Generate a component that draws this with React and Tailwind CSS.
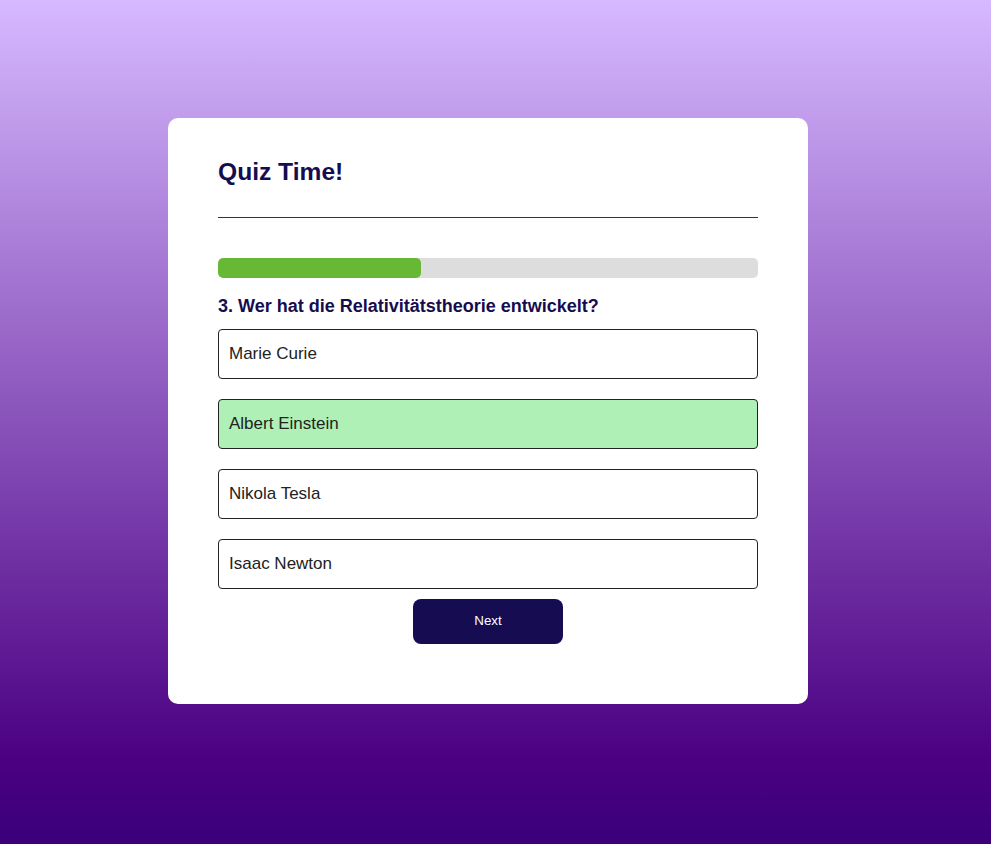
import React, { useState } from 'react';

const question = {
  number: 3,
  text: 'Wer hat die Relativitätstheorie entwickelt?',
  options: ['Marie Curie', 'Albert Einstein', 'Nikola Tesla', 'Isaac Newton'],
};

function App() {
  const [selected, setSelected] = useState('Albert Einstein');
  const progress = 37.5;

  return (
    <div
      className="min-h-screen w-full bg-[linear-gradient(to_bottom,#d6b9ff_0%,#4b0082_90%,#3a007a_100%)] pt-[118px] pr-[15px] flex justify-center items-start"
      style={{ fontFamily: '"Liberation Sans", Arial, sans-serif' }}
    >
      <div className="w-[640px] bg-white rounded-[10px] px-[50px] pt-[40px] pb-[60px]">
        <h1 className="text-[24.6px] font-bold text-[#150d4f] leading-[1.15]">Quiz Time!</h1>
        <hr className="mt-[31px] border-0 border-t border-[#333]" />

        <div className="mt-[40px] h-[20px] w-full rounded-[5px] bg-[#dddddd] overflow-hidden">
          <div className="h-full rounded-[5px] bg-[#66b835]" style={{ width: `${progress}%` }} />
        </div>

        <h2 className="mt-[18px] text-[18px] font-bold text-[#150d4f] leading-[1.15]">
          {question.number}. {question.text}
        </h2>

        <div className="mt-[12px] flex flex-col gap-[20px]">
          {question.options.map((opt) => (
            <button
              key={opt}
              onClick={() => setSelected(opt)}
              className={`h-[50px] w-full text-left px-[10px] border border-[#222] rounded-[4px] text-[17px] text-[#222] ${
                selected === opt ? 'bg-[#aff0b6]' : 'bg-white'
              }`}
            >
              {opt}
            </button>
          ))}
        </div>

        <div className="mt-[10px] flex justify-center">
          <button className="w-[150px] h-[45px] rounded-[8px] bg-[#160c52] text-[13.33px] text-white">
            Next
          </button>
        </div>
      </div>
    </div>
  );
}

export default App;
